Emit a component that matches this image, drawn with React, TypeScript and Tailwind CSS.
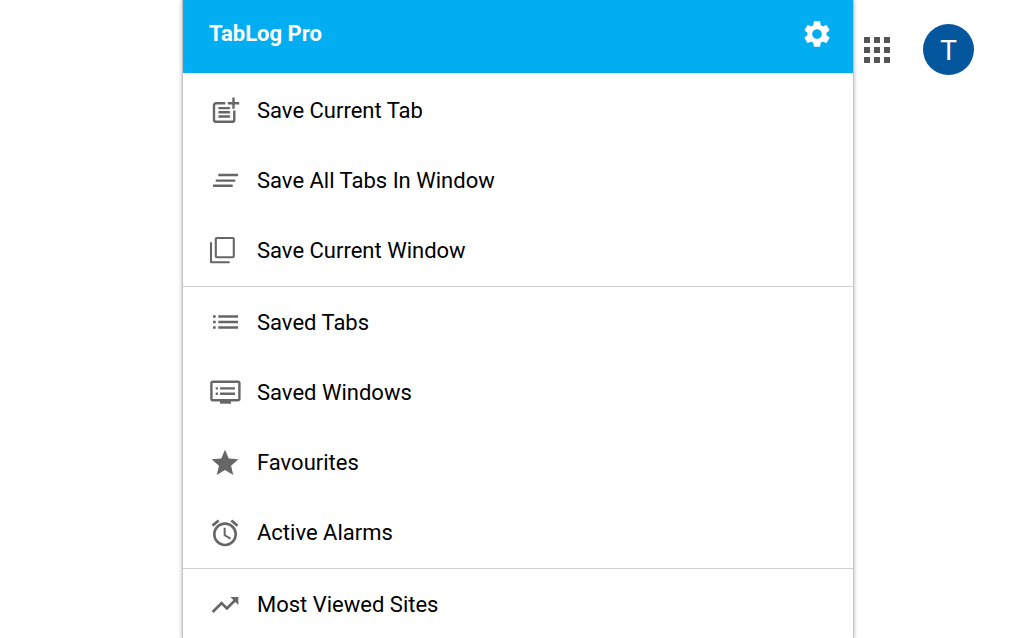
import type { ReactNode } from "react";
import { MdAlarm, MdSettings, MdStar, MdTrendingUp } from "react-icons/md";

function Glyph({ children }: { children: ReactNode }) {
  return (
    <svg viewBox="0 0 32 32" className="size-8" fill="none" stroke="currentColor" strokeWidth="2.4" aria-hidden="true">
      {children}
    </svg>
  );
}

const SaveTabIcon = () => (
  <Glyph>
    <path d="M16.3 8.3H7a2 2 0 0 0-2 2v14.5a2 2 0 0 0 2 2h16.3a2 2 0 0 0 2-2V15.6" />
    <path d="M18.8 8.2h11.4M24.5 2.6v11.2M9.4 13.1h11.5M9.4 17.3h11.5M9.4 21.5h11.5" />
  </Glyph>
);

const SaveAllIcon = () => (
  <Glyph>
    <path d="M9.3 10H29M6.7 15.6h19.6M4 20.8h19.7" />
  </Glyph>
);

const SaveWindowIcon = () => (
  <Glyph>
    <g strokeWidth="2.1">
      <rect x="6.8" y="3" width="18" height="19.2" rx="1" />
      <path d="M2 7.3v19.5a.5.5 0 0 0 .5.5h18.2" />
    </g>
  </Glyph>
);

const SavedTabsIcon = () => (
  <Glyph>
    <path d="M4 9.5h2.7M9.3 9.5H29M4 15h2.7M9.3 15H29M4 20.5h2.7M9.3 20.5H29" />
  </Glyph>
);

const SavedWindowsIcon = () => (
  <Glyph>
    <rect x="2.4" y="4.8" width="28" height="18.4" rx="1.5" />
    <path d="M11 25h11" strokeWidth="3.4" />
    <path d="M6.7 11.4h2.2M11 11.4h15M6.7 16.8h2.2M11 16.8h15" />
  </Glyph>
);

const sections: { label: string; icon: ReactNode }[][] = [
  [
    { label: "Save Current Tab", icon: <SaveTabIcon /> },
    { label: "Save All Tabs In Window", icon: <SaveAllIcon /> },
    { label: "Save Current Window", icon: <SaveWindowIcon /> },
  ],
  [
    { label: "Saved Tabs", icon: <SavedTabsIcon /> },
    { label: "Saved Windows", icon: <SavedWindowsIcon /> },
    { label: "Favourites", icon: <MdStar className="size-8" aria-hidden="true" /> },
    { label: "Active Alarms", icon: <MdAlarm className="size-8" aria-hidden="true" /> },
  ],
  [{ label: "Most Viewed Sites", icon: <MdTrendingUp className="size-8" aria-hidden="true" /> }],
];

function AppsIcon() {
  return (
    <svg viewBox="0 0 26 26" className="size-[26px]" fill="currentColor" aria-hidden="true">
      {[0, 10, 20].map((y) =>
        [0, 10, 20].map((x) => <rect key={`${x}-${y}`} x={x} y={y} width="6" height="6" />),
      )}
    </svg>
  );
}

export default function App() {
  return (
    <div className="flex h-screen overflow-hidden bg-white font-['Roboto',sans-serif] text-black">
      <div className="w-[182px] shrink-0" />
      <main className="min-w-0 flex-1 border-x border-[#c4c4c4] bg-white shadow-[0_0_4px_rgba(0,0,0,0.3)]">
        <header className="flex h-[73px] items-start justify-between bg-[#03adf1] pt-4 pr-[18px] pl-[26px] text-white">
          <h1 className="text-[22px] leading-9 font-bold">TabLog Pro</h1>
          <button type="button" aria-label="Settings" className="flex size-9 items-center justify-center">
            <MdSettings className="size-8" aria-hidden="true" />
          </button>
        </header>
        <nav className="pt-0.5">
          {sections.map((items, index) => (
            <ul key={index} className="border-b border-[#cfcfcf] pt-px last:border-b-0">
              {items.map(({ label, icon }) => (
                <li key={label}>
                  <button type="button" className="flex h-[70px] w-full items-center gap-4 pl-[26px] text-left">
                    <span className="text-[#666666]">{icon}</span>
                    <span className="text-[22px] leading-8">{label}</span>
                  </button>
                </li>
              ))}
            </ul>
          ))}
        </nav>
      </main>
      <aside className="flex items-start gap-[33px] pt-6 pr-[46px] pl-2.5">
        <button type="button" aria-label="Apps" className="flex h-[51px] items-center text-[#555555]">
          <AppsIcon />
        </button>
        <button
          type="button"
          aria-label="Account"
          className="flex size-[51px] items-center justify-center rounded-full bg-[#04569d] pt-0.5 text-[28px] leading-none text-white"
        >
          T
        </button>
      </aside>
    </div>
  );
}
